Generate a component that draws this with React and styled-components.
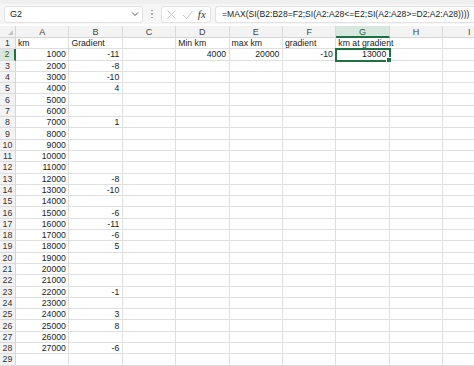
import React from 'react'
import styled, { createGlobalStyle } from 'styled-components'

const GlobalStyle = createGlobalStyle`
    body {
        margin: 0;
        background: #ffffff;
        font-family: "Liberation Sans", Arial, sans-serif;
        overflow: hidden;
    }
`

const Page = styled.div`
    width: 474px;
    height: 366px;
    overflow: hidden;
    background: #ffffff;
`
const TopStrip = styled.div`
    height: 4px;
    background: #efefef;
`
const FormulaBar = styled.div`
    height: 20px;
    display: flex;
    align-items: center;
    padding: 0 0 0 4px;
    background: #f6f6f6;
    gap: 4px;
`
const NameBox = styled.div`
    width: 139px;
    height: 17px;
    box-sizing: border-box;
    background: #fff;
    border: 1px solid #e2e2e2;
    border-radius: 3px;
    display: flex;
    align-items: center;
    justify-content: space-between;
    padding: 0 3px 0 5px;
    font-size: 9px;
    color: #222;
`
const Dots = styled.div`
    width: 10px;
    display: flex;
    flex-direction: column;
    align-items: center;
    gap: 2px;
    & > span {
        width: 1.5px;
        height: 1.5px;
        background: #a0a0a0;
        border-radius: 50%;
    }
`
const IconBox = styled.div`
    width: 50px;
    height: 17px;
    box-sizing: border-box;
    background: #fff;
    border: 1px solid #e2e2e2;
    border-radius: 3px;
    display: flex;
    align-items: center;
    justify-content: space-around;
    padding: 0 2px;
`
const Fx = styled.span`
    font-family: "Liberation Serif", "Times New Roman", serif;
    font-style: italic;
    font-size: 11px;
    color: #333;
`
const FormulaInput = styled.div`
    flex: 1;
    height: 17px;
    box-sizing: border-box;
    background: #fff;
    border: 1px solid #e2e2e2;
    border-right: none;
    border-radius: 3px 0 0 3px;
    display: flex;
    align-items: center;
    padding-left: 6px;
    font-size: 8.6px;
    color: #222;
    white-space: nowrap;
    overflow: hidden;
`
const Sheet = styled.div`
    margin-top: 2px;
    display: grid;
    grid-template-columns: 16px repeat(9, 53.4px);
    grid-template-rows: 12px repeat(29, 11.3px);
    font-size: 8.7px;
    color: #222;
`
const Corner = styled.div`
    background: #f3f3f3;
    border-right: 1px solid #d6d6d6;
    border-bottom: 1px solid #d6d6d6;
    box-sizing: border-box;
    position: relative;
    &::after {
        content: '';
        position: absolute;
        right: 2px;
        bottom: 2px;
        border-left: 5px solid transparent;
        border-bottom: 5px solid #c4c4c4;
    }
`
const ColHead = styled.div`
    box-sizing: border-box;
    background: ${p => (p.$active ? '#d9e8de' : '#f3f3f3')};
    border-right: 1px solid #d9d9d9;
    border-bottom: ${p => (p.$active ? '2px solid #1e7145' : '1px solid #d6d6d6')};
    display: flex;
    align-items: center;
    justify-content: center;
    font-size: 9px;
    color: ${p => (p.$active ? '#1e5c3a' : '#444')};
    padding-top: 1px;
`
const RowHead = styled.div`
    box-sizing: border-box;
    background: ${p => (p.$active ? '#d9e8de' : '#f3f3f3')};
    border-right: ${p => (p.$active ? '2px solid #1e7145' : '1px solid #d6d6d6')};
    border-bottom: 1px solid #dcdcdc;
    display: flex;
    align-items: center;
    justify-content: center;
    font-size: 8.8px;
    color: ${p => (p.$active ? '#1e5c3a' : '#333')};
`
const Cell = styled.div`
    box-sizing: border-box;
    border-right: 1px solid #dfdfdf;
    border-bottom: 1px solid #dfdfdf;
    display: flex;
    align-items: center;
    justify-content: ${p => (p.$num ? 'flex-end' : 'flex-start')};
    padding: 0 2.5px 0 2px;
    white-space: nowrap;
    overflow: visible;
    position: relative;
    ${p => p.$selected && `
        outline: 2px solid #1e7145;
        outline-offset: -1px;
        z-index: 2;
        &::after {
            content: '';
            position: absolute;
            right: -3px;
            bottom: -3px;
            width: 4px;
            height: 4px;
            background: #1e7145;
            border: 1px solid #fff;
        }
    `}
`

const cols = ['A', 'B', 'C', 'D', 'E', 'F', 'G', 'H', 'I']

const gradients = {
    2: -11, 3: -8, 4: -10, 5: 4, 8: 1, 13: -8, 14: -10, 16: -6, 17: -11,
    18: -6, 19: 5, 23: -1, 25: 3, 26: 8, 28: -6,
}

const rowData = (r) => {
    const row = {}
    if (r === 1) {
        return { A: 'km', B: 'Gradient', D: 'Min km', E: 'max km', F: 'gradient', G: 'km at gradient' }
    }
    if (r <= 28) {
        row.A = (r - 1) * 1000
        if (gradients[r] !== undefined) row.B = gradients[r]
    }
    if (r === 2) {
        row.D = 4000
        row.E = 20000
        row.F = -10
        row.G = 13000
    }
    return row
}

const Chevron = () => (
    <svg width="8" height="6" viewBox="0 0 8 6">
        <path d="M1 1.5 L4 4.5 L7 1.5" fill="none" stroke="#555" strokeWidth="1" />
    </svg>
)

const Cross = () => (
    <svg width="11" height="11" viewBox="0 0 11 11">
        <path d="M1.5 1.5 L9.5 9.5 M9.5 1.5 L1.5 9.5" fill="none" stroke="#c8c8c8" strokeWidth="1" />
    </svg>
)

const Check = () => (
    <svg width="12" height="11" viewBox="0 0 12 11">
        <path d="M1 6 L4.5 9.5 L11 1.5" fill="none" stroke="#c8c8c8" strokeWidth="1" />
    </svg>
)

const App = () => {
    const rows = Array.from({ length: 29 }, (_, i) => i + 1)
    return (
        <Page>
            <GlobalStyle />
            <TopStrip />
            <FormulaBar>
                <NameBox>
                    <span>G2</span>
                    <Chevron />
                </NameBox>
                <Dots><span /><span /><span /></Dots>
                <IconBox>
                    <Cross />
                    <Check />
                    <Fx>fx</Fx>
                </IconBox>
                <FormulaInput>=MAX(SI(B2:B28=F2;SI(A2:A28&lt;=E2;SI(A2:A28&gt;=D2;A2:A28))))</FormulaInput>
            </FormulaBar>
            <Sheet>
                <Corner />
                {cols.map(c => (
                    <ColHead key={c} $active={c === 'G'}>{c}</ColHead>
                ))}
                {rows.map(r => {
                    const data = rowData(r)
                    return (
                        <React.Fragment key={r}>
                            <RowHead $active={r === 2}>{r}</RowHead>
                            {cols.map(c => {
                                const v = data[c]
                                return (
                                    <Cell key={c} $num={typeof v === 'number'} $selected={r === 2 && c === 'G'}>
                                        {v}
                                    </Cell>
                                )
                            })}
                        </React.Fragment>
                    )
                })}
            </Sheet>
        </Page>
    )
}

export default App
